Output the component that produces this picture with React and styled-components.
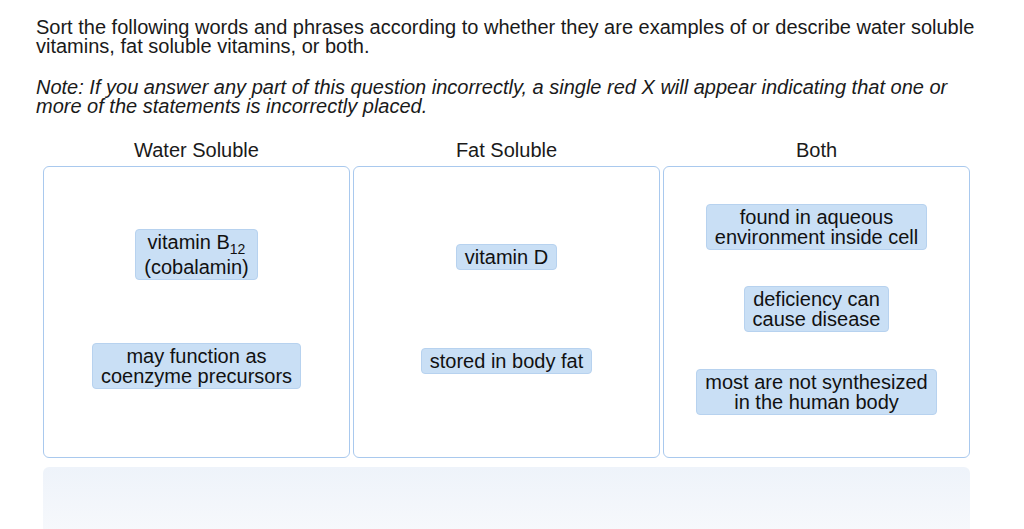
import React from 'react';
import styled, { createGlobalStyle } from 'styled-components';

const GlobalStyle = createGlobalStyle`
  html, body {
    margin: 0;
    padding: 0;
    background: #ffffff;
  }
  body {
    font-family: "Liberation Sans", Arial, sans-serif;
    color: #1a1a1a;
  }
`;

const Page = styled.div`
  padding: 18px 0 0 36px;
  width: 945px;
`;

const Prompt = styled.p`
  margin: 0 0 22px;
  font-size: 20px;
  line-height: 19px;
  font-style: ${(p) => (p.$italic ? 'italic' : 'normal')};
`;

const Board = styled.div`
  margin: 24px 0 0 43px;
  width: 927px;
  display: grid;
  grid-template-columns: repeat(3, 1fr);
  column-gap: 3px;
`;

const Heading = styled.div`
  text-align: center;
  font-size: 20px;
  line-height: 20px;
  height: 26px;
`;

const Bin = styled.div`
  height: 292px;
  box-sizing: border-box;
  border: 1px solid #a9c9ee;
  border-radius: 6px;
  display: flex;
  flex-direction: column;
  align-items: center;
  justify-content: space-evenly;
  padding-bottom: 6px;
`;

const Chip = styled.div`
  background: #c9dff5;
  border: 1px solid #b7d2ef;
  border-radius: 4px;
  padding: 2px 8px;
  font-size: 20px;
  line-height: 20px;
  text-align: center;
  color: #111;
  white-space: nowrap;
`;

/* chemical-style subscript that opens up its own line a little */
const Sub = styled.sub`
  font-size: 14px;
  line-height: 16px;
  vertical-align: -5px;
`;

const Tray = styled.div`
  margin: 9px 0 0 43px;
  width: 927px;
  height: 70px;
  border-radius: 6px 6px 0 0;
  background: linear-gradient(#eef3fa, #f7f9fc);
`;

const columns = [
  {
    title: 'Water Soluble',
    items: [
      <>vitamin B<Sub>12</Sub><br />(cobalamin)</>,
      <>may function as<br />coenzyme precursors</>,
    ],
  },
  {
    title: 'Fat Soluble',
    items: [<>vitamin D</>, <>stored in body fat</>],
  },
  {
    title: 'Both',
    items: [
      <>found in aqueous<br />environment inside cell</>,
      <>deficiency can<br />cause disease</>,
      <>most are not synthesized<br />in the human body</>,
    ],
  },
];

const App = () => {
  return (
    <>
      <GlobalStyle />
      <Page>
        <Prompt>
          Sort the following words and phrases according to whether they are examples of or describe water soluble
          vitamins, fat soluble vitamins, or both.
        </Prompt>
        <Prompt $italic>
          Note: If you answer any part of this question incorrectly, a single red X will appear indicating that one or
          more of the statements is incorrectly placed.
        </Prompt>
      </Page>
      <Board>
        {columns.map((c) => (
          <Heading key={c.title}>{c.title}</Heading>
        ))}
        {columns.map((c) => (
          <Bin key={c.title}>
            {c.items.map((item, i) => (
              <Chip key={i}>{item}</Chip>
            ))}
          </Bin>
        ))}
      </Board>
      <Tray />
    </>
  );
};

export default App;
